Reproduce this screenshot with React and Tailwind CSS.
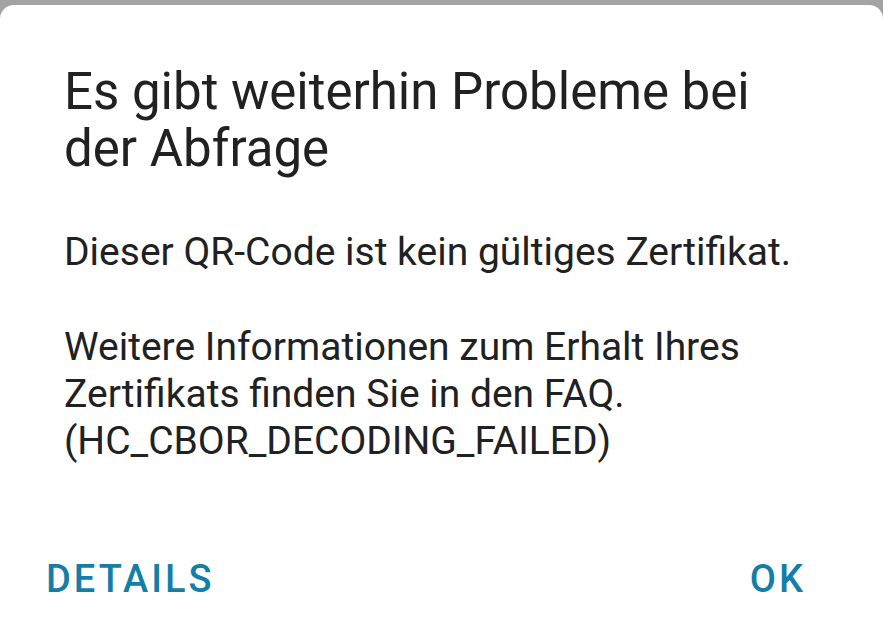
export default function App() {
  return (
    <div className="w-[883px] h-[644px] bg-[#a3a3a3] pt-[5px] overflow-hidden" style={{ fontFamily: 'Roboto, sans-serif' }}>
      <div className="bg-white rounded-t-[14px] h-[639px] flex flex-col">
        <div className="pl-[64px] pr-[88px] pt-[58px]">
          <h1 className="text-[51px] leading-[57px] text-[#212121] font-normal">
            Es gibt weiterhin Probleme bei der Abfrage
          </h1>
          <p className="mt-[52px] text-[39px] leading-[47px] text-[#212121]">
            Dieser QR-Code ist kein gültiges Zertifikat.
          </p>
          <p className="mt-[48px] text-[39px] leading-[47px] text-[#212121]">
            Weitere Informationen zum Erhalt Ihres Zertifikats finden Sie in den FAQ. (HC_CBOR_DECODING_FAILED)
          </p>
        </div>
        <div className="flex justify-between items-center pl-[46px] pr-[77px] mt-[95px]">
          <button className="text-[38px] leading-[38px] font-medium tracking-[3px] text-[#137fa8]">DETAILS</button>
          <button className="text-[38px] leading-[38px] font-medium tracking-[3px] text-[#137fa8]">OK</button>
        </div>
      </div>
    </div>
  )
}
